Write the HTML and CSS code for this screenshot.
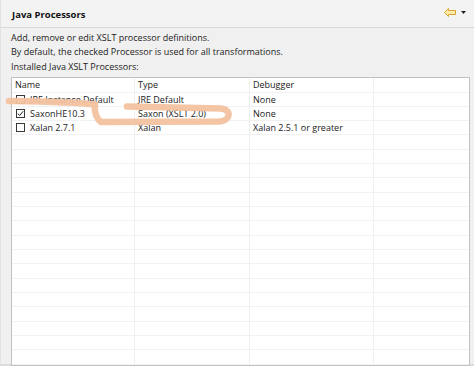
FILE: index.html
```html
<!DOCTYPE html>
<html lang="en">
<head>
<meta charset="utf-8">
<title>Java Processors</title>
<link rel="stylesheet" href="styles.css">
</head>
<body>
<div class="page">
  <header class="title-bar">
    <span class="title">Java Processors</span>
    <div class="tools">
      <svg class="back" width="12" height="9" viewBox="0 0 12 9">
        <path d="M0.5 4.5 L4.5 0.5 L4.5 2.5 L11.5 2.5 L11.5 6.5 L4.5 6.5 L4.5 8.5 Z" fill="#fcebaa" stroke="#d9a431" stroke-width="1" stroke-linejoin="round"/>
      </svg>
      <svg class="drop" width="5" height="3" viewBox="0 0 5 3"><path d="M0 0 H5 L2.5 3 Z" fill="#222"/></svg>
    </div>
  </header>
  <main class="content">
    <p class="line first">Add, remove or edit XSLT processor definitions.</p>
    <p class="line">By default, the checked Processor is used for all transformations.</p>
    <p class="line label">Installed Java XSLT Processors:</p>
    <div class="table">
      <div class="row head">
        <div class="cell">Name</div><div class="cell">Type</div><div class="cell">Debugger</div><div class="cell"></div>
      </div>
      <div class="row">
        <div class="cell"><span class="box"></span>JRE Instance Default</div><div class="cell">JRE Default</div><div class="cell">None</div><div class="cell"></div>
      </div>
      <div class="row">
        <div class="cell"><span class="box checked"><svg width="7" height="7" viewBox="0 0 7 7"><path d="M0.8 3.6 L2.7 5.5 L6.2 1.2" fill="none" stroke="#222" stroke-width="1"/></svg></span>SaxonHE10.3</div><div class="cell">Saxon (XSLT 2.0)</div><div class="cell">None</div><div class="cell"></div>
      </div>
      <div class="row">
        <div class="cell"><span class="box"></span>Xalan 2.7.1</div><div class="cell">Xalan</div><div class="cell">Xalan 2.5.1 or greater</div><div class="cell"></div>
      </div>
      <div class="row"><div class="cell"></div><div class="cell"></div><div class="cell"></div><div class="cell"></div></div>
      <div class="row"><div class="cell"></div><div class="cell"></div><div class="cell"></div><div class="cell"></div></div>
      <div class="row"><div class="cell"></div><div class="cell"></div><div class="cell"></div><div class="cell"></div></div>
      <div class="row"><div class="cell"></div><div class="cell"></div><div class="cell"></div><div class="cell"></div></div>
      <div class="row"><div class="cell"></div><div class="cell"></div><div class="cell"></div><div class="cell"></div></div>
      <div class="row"><div class="cell"></div><div class="cell"></div><div class="cell"></div><div class="cell"></div></div>
      <div class="row"><div class="cell"></div><div class="cell"></div><div class="cell"></div><div class="cell"></div></div>
      <div class="row"><div class="cell"></div><div class="cell"></div><div class="cell"></div><div class="cell"></div></div>
      <div class="row"><div class="cell"></div><div class="cell"></div><div class="cell"></div><div class="cell"></div></div>
      <div class="row"><div class="cell"></div><div class="cell"></div><div class="cell"></div><div class="cell"></div></div>
      <div class="row"><div class="cell"></div><div class="cell"></div><div class="cell"></div><div class="cell"></div></div>
      <div class="row"><div class="cell"></div><div class="cell"></div><div class="cell"></div><div class="cell"></div></div>
      <div class="row"><div class="cell"></div><div class="cell"></div><div class="cell"></div><div class="cell"></div></div>
      <div class="row"><div class="cell"></div><div class="cell"></div><div class="cell"></div><div class="cell"></div></div>
      <div class="row"><div class="cell"></div><div class="cell"></div><div class="cell"></div><div class="cell"></div></div>
      <div class="row"><div class="cell"></div><div class="cell"></div><div class="cell"></div><div class="cell"></div></div>
    </div>
  </main>
  <svg class="markup" width="474" height="366" viewBox="0 0 474 366">
    <path d="M8 101 C40 101.5 78 102.5 94 104.5 C93 111 95 118.5 100 122 L218 121.5 C230 121 231 109.5 220 108.5 L126 106.5" fill="none" stroke="#f3c2a0" stroke-width="6.5" stroke-linecap="round" stroke-linejoin="round" opacity="0.95"/>
  </svg>
</div>
</body>
</html>
```
FILE: styles.css
```css
* { box-sizing: border-box; }
html, body { margin: 0; padding: 0; }
body {
  width: 474px;
  height: 366px;
  overflow: hidden;
  background: #f0f0f0;
  font-family: "Open Sans", "Noto Sans", sans-serif;
  font-size: 9px;
  color: #222;
}
.page {
  position: relative;
  width: 474px;
  height: 366px;
  display: flex;
  flex-direction: column;
  border-left: 1px solid #e2e2e2;
  border-bottom: 2px solid #dcdcdc;
}
.title-bar {
  height: 28px;
  flex: none;
  display: flex;
  align-items: center;
  justify-content: space-between;
  padding: 2px 2px 0 11px;
  background: #f3f3f3;
  border-bottom: 1px solid #d8d8d8;
}
.title {
  font-weight: 700;
  font-size: 9.5px;
  color: #111;
}
.tools {
  align-self: flex-start;
  display: flex;
  align-items: center;
  gap: 5px;
  padding: 6px 6px 0 0;
}
.back { display: block; }
.drop { display: block; }
.content {
  flex: 1;
  display: flex;
  flex-direction: column;
  padding: 3px 4px 2px 10px;
}
.line {
  margin: 0;
  line-height: 14px;
  white-space: nowrap;
}
.line.label { margin-top: 1px; margin-bottom: 3px; }
.table {
  flex: 1;
  background: #fff;
  border: 1px solid #c2c2c2;
  overflow: hidden;
}
.row {
  display: grid;
  grid-template-columns: 123px 115px 124px 1fr;
  height: 14.33px;
  border-bottom: 1px solid #f1f1f1;
}
.row.head { height: 14.5px; }
.cell {
  display: flex;
  align-items: center;
  padding-left: 3px;
  border-right: 1px solid #efefef;
  white-space: nowrap;
  line-height: 13px;
}
.cell:last-child { border-right: none; }
.box {
  width: 9px;
  height: 9px;
  border: 1px solid #3a3a3a;
  background: #fff;
  margin: 0 5px 0 1px;
  display: inline-flex;
  align-items: center;
  justify-content: center;
  flex: none;
}
.box svg { display: block; }
.markup {
  position: absolute;
  left: 0;
  top: 0;
  pointer-events: none;
}
```
